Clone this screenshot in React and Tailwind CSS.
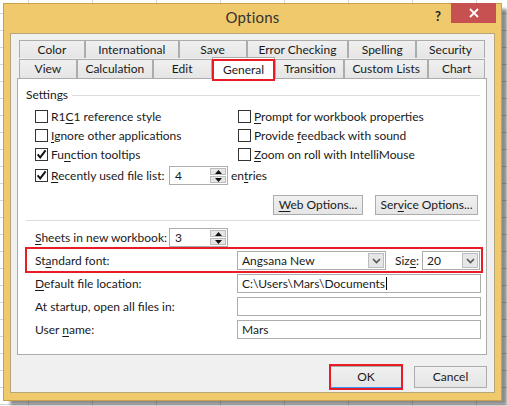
import React from 'react';

const U = ({ children }) => (
  <span className="underline decoration-1 underline-offset-[2px]">{children}</span>
);

const Check = ({ checked }) => (
  <span className="w-[13px] h-[13px] border border-[#333333] bg-white flex items-center justify-center shrink-0">
    {checked && (
      <svg width="11" height="11" viewBox="0 0 11 11">
        <path d="M1.6 5.4 L4.2 8.4 L9.6 1.4" stroke="#111" strokeWidth="1.9" fill="none" />
      </svg>
    )}
  </span>
);

const Spin = ({ value }) => (
  <div className="flex h-[19px] w-[59px] border border-[#abadb3] bg-white shrink-0">
    <span className="flex-1 pl-[5px] leading-[17px]">{value}</span>
    <div className="w-[16px] my-px mr-px flex flex-col gap-px">
      <span className="flex-1 bg-[#e6e6e6] border border-[#bcbcbc] flex items-center justify-center">
        <svg width="7" height="4" viewBox="0 0 7 4"><path d="M0 4 L3.5 0 L7 4 Z" fill="#111" /></svg>
      </span>
      <span className="flex-1 bg-[#e6e6e6] border border-[#bcbcbc] flex items-center justify-center">
        <svg width="7" height="4" viewBox="0 0 7 4"><path d="M0 0 L3.5 4 L7 0 Z" fill="#111" /></svg>
      </span>
    </div>
  </div>
);

const Combo = ({ value, w }) => (
  <div className={`flex h-[19px] border border-[#acacac] bg-white shrink-0 ${w}`}>
    <span className="flex-1 pl-[4px] leading-[17px]">{value}</span>
    <span className="w-[16px] my-px mr-px bg-[#e6e6e6] border border-[#bcbcbc] flex items-center justify-center">
      <svg width="9" height="6" viewBox="0 0 9 6">
        <path d="M1 1 L4.5 4.5 L8 1" stroke="#555" strokeWidth="1.6" fill="none" />
      </svg>
    </span>
  </div>
);

const Field = ({ children }) => (
  <div className="h-[19px] w-[244px] border border-[#acacac] bg-white pl-[4px] leading-[17px] flex items-center shrink-0">
    {children}
  </div>
);

const Btn = ({ children, w, className = '' }) => (
  <button
    className={`h-[20px] border border-[#acacac] bg-gradient-to-b from-[#f0f0f0] to-[#e5e5e5] text-[12px] leading-none ${w} ${className}`}
  >
    {children}
  </button>
);

const row1 = [
  ['Color', 'w-[66px]'],
  ['International', 'w-[94px]'],
  ['Save', 'w-[68px]'],
  ['Error Checking', 'w-[102px]'],
  ['Spelling', 'w-[68px]'],
  ['Security', 'w-[69px]'],
];

const row2 = [
  ['View', 'w-[58px]'],
  ['Calculation', 'w-[76px]'],
  ['Edit', 'w-[59px]'],
  ['General', 'w-[64px]'],
  ['Transition', 'w-[69px]'],
  ['Custom Lists', 'w-[84px]'],
  ['Chart', 'w-[57px]'],
];

const Tab = ({ label, w }) => (
  <div
    className={`${w} h-full border border-b-0 border-[#acacac] bg-gradient-to-b from-[#f0f0f0] to-[#e5e5e5] flex items-center justify-center`}
  >
    {label}
  </div>
);

export default function App() {
  return (
    <div className="w-[507px] h-[406px] overflow-hidden bg-white bg-[linear-gradient(to_right,#d6d6d6_1px,transparent_1px),linear-gradient(to_bottom,#d6d6d6_1px,transparent_1px)] bg-[size:64px_17px] bg-[position:28px_13px] pt-[3px] pl-[3px] font-['Segoe_UI',Lato,'Noto_Sans',sans-serif] text-[12px] text-[#1a1a1a]">
      <div className="w-[499px] h-[398px] border border-[#c5a04f] bg-[#f0c96c] flex flex-col shadow-[6px_5px_3px_-1px_rgba(0,0,0,0.45)]">
        {/* title bar */}
        <div className="h-[29px] shrink-0 grid grid-cols-[1fr_auto_1fr]">
          <div />
          <div className="self-center pb-[3px] text-[15px] text-[#333] tracking-[0.2px]">Options</div>
          <div className="flex justify-end items-start">
            <span className="mt-[3px] mr-[10px] font-bold text-[13px] text-[#222]">?</span>
            <button className="-mt-px mr-[5px] w-[45px] h-[20px] bg-[#c75050] flex items-center justify-center">
              <svg width="10" height="10" viewBox="0 0 10 10">
                <path d="M1 1 L9 9 M9 1 L1 9" stroke="#fff" strokeWidth="1.8" />
              </svg>
            </button>
          </div>
        </div>

        {/* client area */}
        <div className="mx-[6px] h-[360px] border border-[#b8a57a] bg-[#f0f0f0] pt-[6px] pl-[6px] pr-[7px] flex flex-col">
          {/* tabs */}
          <div className="px-[2px] flex flex-col">
            <div className="flex h-[18px]">
              {row1.map(([l, w]) => (
                <Tab key={l} label={l} w={w} />
              ))}
            </div>
            <div className="flex h-[19px] mt-px">
              {row2.map(([l, w]) =>
                l === 'General' ? (
                  <div
                    key={l}
                    className={`${w} relative z-10 -mt-[2px] h-[22px] border border-b-0 border-[#acacac] bg-white flex items-start pt-[3px] justify-center`}
                  >
                    {l}
                    <span className="absolute -left-px -right-px top-px -bottom-[2px] border-2 border-[#e81c24]" />
                  </div>
                ) : (
                  <Tab key={l} label={l} w={w} />
                )
              )}
            </div>
          </div>

          {/* panel */}
          <div className="h-[277px] border border-[#acacac] bg-white flex flex-col pt-[8px] shrink-0">
            <div className="flex items-center pl-[8px] pr-[6px] h-[16px] gap-[4px]">
              <span>Settings</span>
              <span className="flex-1 h-px bg-[#dcdcdc]" />
            </div>

            <div className="pl-[17px] mt-[4px] flex flex-col">
              {[
                [false, <>R1<U>C</U>1 reference style</>, <><U>P</U>rompt for workbook properties</>],
                [false, <><U>I</U>gnore other applications</>, <>Provide <U>f</U>eedback with sound</>],
                [true, <>Fu<U>n</U>ction tooltips</>, <><U>Z</U>oom on roll with IntelliMouse</>],
              ].map(([c, l, r], i) => (
                <div key={i} className="flex h-[19px]">
                  <div className="w-[203px] flex items-center gap-[3px]">
                    <Check checked={c} />
                    <span>{l}</span>
                  </div>
                  <div className="flex items-center gap-[3px]">
                    <Check checked={false} />
                    <span>{r}</span>
                  </div>
                </div>
              ))}
              <div className="flex h-[19px] mt-[2px] items-center">
                <div className="w-[134px] flex items-center gap-[3px]">
                  <Check checked />
                  <span><U>R</U>ecently used file list:</span>
                </div>
                <Spin value="4" />
                <span className="ml-[3px]">en<U>t</U>ries</span>
              </div>
            </div>

            <div className="mt-[10px] flex justify-end gap-[12px] pr-[8px]">
              <Btn w="w-[90px]"><U>W</U>eb Options...</Btn>
              <Btn w="w-[103px]">Ser<U>v</U>ice Options...</Btn>
            </div>

            <div className="mt-[5px] ml-[8px] mr-[6px] h-px bg-[#dcdcdc]" />

            <div className="mt-[7px] pl-[17px] flex items-center">
              <span className="w-[134px]"><U>S</U>heets in new workbook:</span>
              <Spin value="3" />
            </div>

            <div className="relative mt-[4px] pl-[17px] flex items-center">
              <span className="w-[202px]">St<U>a</U>ndard font:</span>
              <Combo value="Angsana New" w="w-[149px]" />
              <span className="ml-[9px] w-[27px]">Siz<U>e</U>:</span>
              <Combo value="20" w="w-[58px]" />
              <span className="absolute left-[7px] right-[3px] -top-[4px] -bottom-[3px] border-2 border-[#e81c24]" />
            </div>

            <div className="mt-[4px] pl-[17px] flex items-center">
              <span className="w-[202px]"><U>D</U>efault file location:</span>
              <Field>
                C:\Users\Mars\Documents<span className="inline-block w-px h-[13px] bg-black ml-px" />
              </Field>
            </div>

            <div className="mt-[4px] pl-[17px] flex items-center">
              <span className="w-[202px]">At startup, open all f<U>i</U>les in:</span>
              <Field />
            </div>

            <div className="mt-[4px] pl-[17px] flex items-center">
              <span className="w-[202px]">User <U>n</U>ame:</span>
              <Field>Mars</Field>
            </div>
          </div>

          {/* dialog buttons */}
          <div className="mt-[11px] flex justify-end gap-[12px]">
            <div className="relative">
              <Btn w="w-[72px]" className="h-[22px] border-b-[#3399ff]">OK</Btn>
              <span className="absolute -left-px -right-px -top-[2px] -bottom-[2px] border-2 border-[#e81c24]" />
            </div>
            <Btn w="w-[73px]" className="h-[22px]">Cancel</Btn>
          </div>
        </div>
      </div>
    </div>
  );
}
